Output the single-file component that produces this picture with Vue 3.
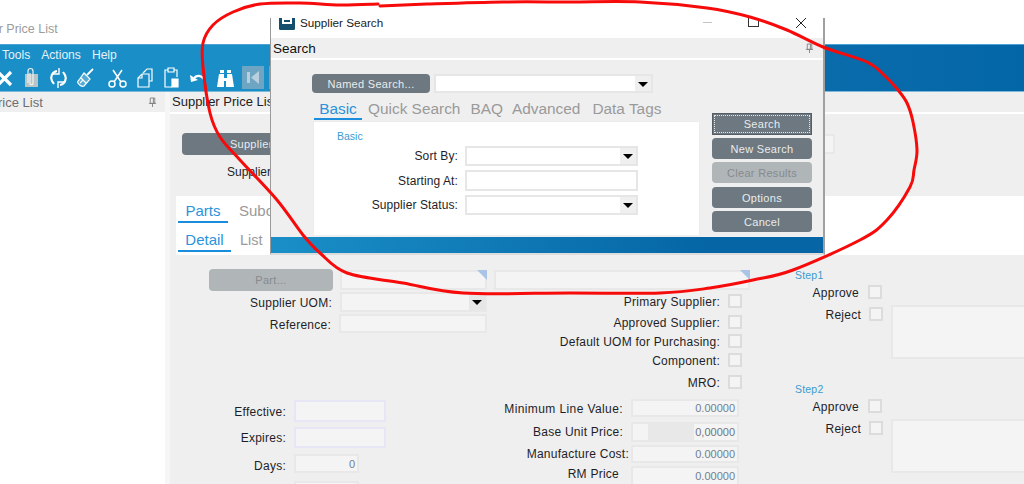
<script setup>
const pts = [[380,6],[430,4],[503,2],[570,2],[640,2],[707,8],[750,17],[787,30],[823,47],[867,62],[885,76],[898,90],[907,103],[913,122],[917,150],[914,170],[910,187],[887,220],[860,240],[793,270],[753,280],[710,288],[660,293],[570,293],[463,293],[403,283],[347,273],[320,253],[303,235],[277,200],[240,160],[220,137],[210,113],[203,67],[203,43],[213,25],[233,12],[260,4],[300,3],[340,5],[378,4]]
function spline(p) {
  let d = `M${p[0][0]} ${p[0][1]}`
  for (let i = 0; i < p.length - 1; i++) {
    const a = p[Math.max(i - 1, 0)], b = p[i], c = p[i + 1], e = p[Math.min(i + 2, p.length - 1)]
    d += `C${b[0] + (c[0] - a[0]) / 6} ${b[1] + (c[1] - a[1]) / 6} ${c[0] - (e[0] - b[0]) / 6} ${c[1] - (e[1] - b[1]) / 6} ${c[0]} ${c[1]}`
  }
  return d
}
const redPath = spline(pts)
const checks = [
  { label: 'Primary Supplier:', cls: 'c1' },
  { label: 'Approved Supplier:', cls: 'c2' },
  { label: 'Default UOM for Purchasing:', cls: 'c3' },
  { label: 'Component:', cls: 'c3' },
  { label: 'MRO:', cls: 'c4' },
]
</script>

<template>
  <div class="app">
    <header class="title">Supplier Price List</header>

    <section class="ribbon">
      <nav class="menu"><span>Tools</span><span>Actions</span><span>Help</span></nav>
      <div class="tools">
        <svg class="ti" viewBox="0 0 27 24"><path d="M7 6L20 19M20 6L7 19" stroke="#fff" stroke-width="3.2" fill="none"/></svg>
        <svg class="ti" viewBox="0 0 27 24"><path d="M7 8h13v13H7z" fill="#b9c4c6"/><path d="M10 17V5a2 2 0 0 1 5 0v13a2 2 0 0 1-3 0V7" fill="none" stroke="#eef2f2" stroke-width="1.2"/></svg>
        <svg class="ti" viewBox="0 0 27 24" fill="none" stroke="#fff" stroke-width="2.2"><path d="M12 5C7 6 5 11 7 15l2 3"/><path d="M15 19c5-1 7-6 5-10l-2-3"/><path d="M14 2v6h-6M13 22v-6h6" stroke-width="1.4"/></svg>
        <svg class="ti" viewBox="0 0 27 24" fill="none" stroke="#fff" stroke-width="1.2"><path d="M15 9L21 3" stroke-width="1.8"/><path d="M12 7l6 6-6 7c-2 1-5-1-6-3-1-1 0-2 1-3z" fill="rgba(255,255,255,.25)"/><path d="M9 12l5 5M8 17l3-3"/></svg>
        <svg class="ti gap" viewBox="0 0 27 24" fill="none" stroke="#fff" stroke-width="1.5"><circle cx="8" cy="18" r="3"/><circle cx="19" cy="18" r="3"/><path d="M10 16L18 4M17 16L9 4"/></svg>
        <svg class="ti" viewBox="0 0 27 24" fill="none" stroke="#fff" stroke-width="1.2"><path d="M12 7l4-4h5v12h-3"/><path d="M11 8h7v13H7V12z"/><path d="M11 8v4H7"/></svg>
        <svg class="ti" viewBox="0 0 27 24" fill="none" stroke="#fff" stroke-width="1.2"><path d="M10 4H7v17h7M16 4h3v7"/><path d="M10 2h6v4h-6z"/><path d="M14 13h6v8h-6z" fill="#fff"/></svg>
        <svg class="ti" viewBox="0 0 27 24" fill="none" stroke="#fff" stroke-width="2.2"><path d="M9 12c3-3 7-3 10 1l1 3"/><path d="M5 9l1 7 7-2z" fill="#fff" stroke="none"/></svg>
        <svg class="ti" viewBox="0 0 27 24" fill="#fff"><path d="M8 4h4v3H8zM15 4h4v3h-4zM7 8h5v4h3V8h5l2 13h-8v-6h-2v6H5z"/></svg>
        <span class="nav"><svg viewBox="0 0 22 23"><path d="M5 6h3v11H5zM17 5v13L9 11.500z" fill="#b8d0de"/></svg></span>
        <span class="nav"></span>
      </div>
    </section>

    <div class="shell">
      <aside class="side">
        <div class="side-head">
          <span class="side-title">Supplier Price List</span>
          <svg class="pin" viewBox="0 0 10 12"><path d="M2.500 1h5v6h-5zM1 7h8M5 7v4M6 1v6" fill="none" stroke="#808080"/></svg>
        </div>
      </aside>
      <div class="split"></div>

      <main class="main">
        <div class="main-head">Supplier Price List</div>
        <div class="main-top">
          <div class="top-row">
            <button class="btn sup">Supplier...</button>
            <div class="fld sup-f"></div>
          </div>
          <div class="sup-l">Supplier Name:</div>
        </div>
        <div class="band">
          <div class="band-row r1">
            <span class="tab on parts">Parts</span><span class="tab sub">Subcontract</span>
          </div>
          <div class="band-row r2">
            <span class="tab on detail">Detail</span><span class="tab list">List</span>
          </div>
        </div>

        <div class="form">
          <div class="col1">
            <div class="line">
              <button class="btn dis part">Part...</button>
              <div class="fld tri f-part"></div>
            </div>
            <div class="line uom">
              <label class="lb w162">Supplier UOM:</label>
              <div class="fld combo f-uom"><i class="arrow alt"></i></div>
            </div>
            <div class="line ref">
              <label class="lb w161">Reference:</label>
              <div class="fld f-ref"></div>
            </div>
            <div class="line eff">
              <label class="lb w116">Effective:</label>
              <div class="fld lav f-eff"></div>
            </div>
            <div class="line exp">
              <label class="lb w116 nudge0">Expires:</label>
              <div class="fld lav f-exp"></div>
            </div>
            <div class="line days">
              <label class="lb w116 nudge2">Days:</label>
              <div class="fld num f-days">0</div>
            </div>
            <div class="line next">
              <label class="lb w116"></label>
              <div class="fld f-days"></div>
            </div>
          </div>

          <div class="col2">
            <div class="fld tri f-desc"></div>
            <div v-for="c in checks" :key="c.label" class="line chk" :class="c.cls">
              <label class="lb w226">{{ c.label }}</label>
              <span class="cb"></span>
            </div>
            <div class="line n1">
              <label class="lb w129 wide">Minimum Line Value:</label>
              <div class="fld num f-n h18">0.00000</div>
            </div>
            <div class="line n2">
              <label class="lb w129 nudge0">Base Unit Price:</label>
              <div class="fld num f-n h20 dark"><i class="shade"></i>0,00000</div>
            </div>
            <div class="line n3">
              <label class="lb w135 nudge0">Manufacture Cost:</label>
              <div class="fld num f-n h18">0.00000</div>
            </div>
            <div class="line n3">
              <label class="lb w125 rm">RM Price</label>
              <div class="fld num f-n h20">0.00000</div>
            </div>
          </div>

          <div class="col3">
            <div class="step">Step1</div>
            <div class="line app-row"><label class="lb w95">Approve</label><span class="cb"></span></div>
            <div class="line rej-row">
              <label class="lb w97 rej">Reject</label><span class="cb rc"></span>
              <div class="fld memo"></div>
            </div>
            <div class="step s2">Step2</div>
            <div class="line app-row"><label class="lb w95">Approve</label><span class="cb"></span></div>
            <div class="line rej-row">
              <label class="lb w97 rej">Reject</label><span class="cb rc"></span>
              <div class="fld memo"></div>
            </div>
          </div>
        </div>
      </main>
    </div>

    <div class="dialog">
      <div class="d-title">
        <svg class="d-icon" viewBox="0 0 16 16"><rect width="16" height="16" rx="1.500" fill="#14506e"/><path d="M3 2h10v9H3z" fill="#fff"/><path d="M5 7h6M3 11h11" stroke="#14506e" stroke-width="2" fill="none"/></svg>
        <span class="d-name">Supplier Search</span>
        <i class="w-min"></i>
        <i class="w-max"></i>
        <svg class="w-x" viewBox="0 0 10 10"><path d="M0 0L10 10M10 0L0 10" stroke="#222" fill="none"/></svg>
      </div>
      <div class="d-head">
        <span>Search</span>
        <svg class="pin" viewBox="0 0 10 12"><path d="M2.500 1h5v6h-5zM1 7h8M5 7v4M6 1v6" fill="none" stroke="#808080"/></svg>
      </div>
      <div class="d-body">
        <div class="d-left">
          <div class="named">
            <button class="btn nbtn">Named Search...</button>
            <div class="fld white combo f-named"><i class="arrow"></i></div>
          </div>
          <div class="d-tabs">
            <span class="dt on">Basic</span><span class="dt t2">Quick Search</span><span class="dt t3">BAQ</span><span class="dt t3b">Advanced</span><span class="dt t4">Data Tags</span>
          </div>
          <div class="panel">
            <div class="grp">Basic</div>
            <div class="pline"><label class="lb w144">Sort By:</label><div class="fld white combo f-s"><i class="arrow"></i></div></div>
            <div class="pline"><label class="lb w144">Starting At:</label><div class="fld white f-s h21"></div></div>
            <div class="pline"><label class="lb w144">Supplier Status:</label><div class="fld white combo f-s"><i class="arrow"></i></div></div>
          </div>
        </div>
        <div class="d-right">
          <button class="btn act focus">Search</button>
          <button class="btn act">New Search</button>
          <button class="btn act dis">Clear Results</button>
          <button class="btn act opt">Options</button>
          <button class="btn act">Cancel</button>
        </div>
      </div>
      <div class="d-foot"></div>
    </div>

    <svg class="ink" viewBox="0 0 1024 484"><path :d="redPath" fill="none" stroke="#f70a0a" stroke-width="3" stroke-linecap="round" stroke-linejoin="round"/></svg>
  </div>
</template>

<style scoped>
.app { position: relative; width: 1024px; height: 484px; overflow: hidden; background: #fff; font-family: "Liberation Sans", Arial, sans-serif; font-size: 12px; color: #1e1e28; }
.title { height: 44px; padding-top: 22px; box-sizing: border-box; margin-left: -43px; color: #9c9c9c; font-size: 12.500px; line-height: 14px; white-space: nowrap; }
.ribbon { height: 48px; box-sizing: border-box; border-top: 1px solid #4aa3d3; border-bottom: 1px solid #7cb8d8; background: linear-gradient(90deg, #1a8fc7 0, #1a8fc7 27%, #0a6cab 80%, #0366a7 100%); }
.menu { display: flex; height: 20px; align-items: center; padding-left: 2px; color: #e6f1f7; gap: 11px; font-size: 12.100px; }
.tools { display: flex; align-items: center; margin-left: -9px; height: 25px; }
.ti { width: 27px; height: 24px; flex: none; }
.ti.gap { margin-left: 5px; }
.nav { display: block; flex: none; width: 22px; height: 23px; margin: 0 2px 0 3px; background: #6ea5c3; }
.nav svg { display: block; width: 22px; height: 23px; }
.shell { display: flex; height: 392px; background: #efefef; }
.side { width: 165px; flex: none; background: #fff; }
.side-head { display: flex; align-items: center; justify-content: space-between; height: 20px; background: #efefef; padding-right: 8px; overflow: hidden; }
.side-title { margin-left: -62px; color: #6e6e6e; font-size: 13px; white-space: nowrap; }
.pin { width: 9px; height: 11px; flex: none; }
.split { width: 5px; flex: none; background: #f6f6f6; }
.main { flex: 1; min-width: 0; }
.main-head { height: 20px; line-height: 20px; padding-left: 2px; font-size: 13px; color: #222; box-sizing: border-box; }
.main-top { height: 84px; box-sizing: border-box; border-top: 2px solid #fff; padding: 19px 0 0 12px; }
.top-row { display: flex; align-items: flex-start; }
.btn { display: block; border: 0; padding: 0; border-radius: 4px; background: #6d7880; color: #e8ecee; font: 11px "Liberation Sans", Arial, sans-serif; letter-spacing: .3px; text-align: center; }
.btn.dis { background: #b0b5b8; color: #858b8f; }
.sup { width: 148px; height: 22px; flex: none; }
.sup-f { width: 498px; height: 20px; margin: 1px 0 0 7px; flex: none; }
.sup-l { margin: 10px 0 0 45px; }
.fld { position: relative; box-sizing: border-box; background: #f4f4f4; border: 2px solid #e8e8e8; flex: none; }
.fld.white { background: #fff; border-color: #e6e6e6; }
.fld.lav { border-color: #e6e6f6; }
.num { display: flex; align-items: center; justify-content: flex-end; padding-right: 2px; color: #6f8190; font-size: 11px; }
.num.dark { color: #6d7680; }
.shade { width: 46px; height: 16px; margin-right: 1px; background: #e8e8e8; }
.combo .arrow { position: absolute; top: 0; right: 0; bottom: 0; width: 16px; background: #efefef; }
.arrow.alt { background: #e6e6e6; }
.arrow::after { content: ""; position: absolute; left: 3px; top: 6px; border: 5px solid transparent; border-top: 5px solid #000; border-bottom: 0; }
.tri::after { content: ""; position: absolute; top: -2px; right: -2px; width: 10px; height: 10px; background: #a9c4e4; clip-path: polygon(0 0, 100% 0, 100% 100%); }
.band { height: 59px; margin-left: 6px; background: #fff; padding-left: 2px; overflow: hidden; }
.band-row { display: flex; }
.r1 { height: 28px; padding-top: 5px; box-sizing: border-box; }
.r2 { height: 29px; padding-top: 6px; box-sizing: border-box; }
.tab { display: block; height: 22px; line-height: 20px; font-size: 15px; color: #9a9a9a; white-space: nowrap; text-align: center; box-sizing: border-box; }
.tab.on { color: #2a93dc; border-bottom: 2px solid #1a8ddc; }
.parts { width: 50px; }
.sub { margin-left: 11px; }
.detail { width: 53px; }
.list { margin-left: 9px; font-size: 14.500px; }
.form { display: flex; padding-top: 14px; height: 229px; box-sizing: border-box; overflow: hidden; }
.col1 { width: 324px; flex: none; }
.col2 { width: 270px; flex: none; }
.col3 { flex: 1; min-width: 0; overflow: hidden; }
.line { display: flex; align-items: center; }
.lb { display: block; flex: none; text-align: right; white-space: nowrap; font-size: 12px; letter-spacing: .25px; line-height: 14px; padding-top: 2px; }
.lb.nudge0 { padding-top: 0; }
.lb.nudge2 { padding-top: 4px; }
.lb.rm { padding: 0 0 4px; }
.lb.wide { letter-spacing: .4px; }
.w162 { width: 162px; margin-right: 8px; }
.w161 { width: 161px; margin-right: 8px; }
.w116 { width: 116px; margin-right: 8px; }
.w226 { width: 226px; margin-right: 8px; }
.w129 { width: 129px; margin-right: 8px; }
.w135 { width: 135px; margin-right: 2px; }
.w125 { width: 125px; margin-right: 12px; }
.w95 { width: 95px; margin-right: 9px; }
.w97 { width: 97px; margin-right: 8px; }
.w144 { width: 144px; margin-right: 7px; padding-top: 0; letter-spacing: .1px; }
.part { width: 124px; height: 22px; margin-left: 39px; flex: none; }
.f-part { width: 147px; height: 20px; margin-left: 7px; }
.uom { margin-top: 1px; }
.f-uom { width: 147px; height: 20px; }
.ref { margin-top: 2px; }
.f-ref { width: 148px; height: 19px; }
.eff { margin-top: 67px; }
.f-eff { width: 92px; height: 22px; }
.exp { margin-top: 5px; }
.f-exp { width: 92px; height: 21px; }
.days { margin-top: 6px; }
.f-days { width: 65px; height: 19px; }
.next { margin-top: 8px; }
.f-desc { width: 256px; height: 20px; margin-top: 1px; }
.chk { height: 14px; }
.c1 { margin-top: 4px; }
.c2 { margin-top: 7px; }
.c3 { margin-top: 5px; }
.c4 { margin-top: 8px; }
.cb { display: block; box-sizing: border-box; width: 14px; height: 14px; background: #f4f4f4; border: 2px solid #dcdcdc; flex: none; }
.f-n { width: 108px; }
.h18 { height: 18px; }
.h20 { height: 20px; }
.n1 { margin-top: 10px; }
.n2 { margin-top: 5px; }
.n3 { margin-top: 3px; }
.step { height: 12px; line-height: 12px; margin-left: 31px; color: #3a9bd0; font-size: 10.500px; letter-spacing: .2px; }
.s2 { margin-top: 24px; }
.app-row { margin-top: 4px; height: 14px; }
.rej-row { margin-top: 6px; align-items: flex-start; }
.rej { margin-top: 3px; padding-top: 0; }
.cb.rc { margin-top: 2px; }
.memo { width: 140px; height: 54px; margin-left: 8px; }

.dialog { position: absolute; left: 270px; top: 18px; width: 555px; height: 237px; box-sizing: border-box; border-left: 1px solid #9a9a9a; border-right: 2px solid #a0a0a0; border-bottom: 2px solid #dcdcdc; background: #fff; overflow: hidden; }
.d-title { position: relative; display: flex; align-items: flex-start; height: 20px; }
.d-icon { width: 16px; height: 16px; margin: -4px 0 0 8px; flex: none; }
.d-name { margin: -2px 0 0 5px; line-height: 14px; font-size: 11.700px; color: #222; }
.w-min { position: absolute; left: 432px; top: 4px; width: 9px; height: 1px; background: #c4c4c4; }
.w-max { position: absolute; left: 477px; top: -3px; width: 9px; height: 10px; border: 1px solid #333; }
.w-x { position: absolute; left: 525px; top: 0; width: 10px; height: 10px; }
.d-head { display: flex; justify-content: space-between; align-items: center; height: 20px; padding: 0 9px 0 2px; background: #efefef; font-size: 13.500px; color: #111; border-bottom: 2px solid #fff; }
.d-body { display: flex; height: 177px; background: #efefef; }
.d-left { width: 387px; margin-left: 42px; padding-top: 14px; flex: none; }
.named { display: flex; margin-left: -1px; }
.nbtn { width: 118px; height: 19px; flex: none; }
.f-named { width: 219px; height: 19px; margin-left: 4px; }
.d-tabs { display: flex; height: 24px; margin: 4px 0 0 1px; }
.dt { display: block; box-sizing: border-box; height: 23px; line-height: 24px; font-size: 15.400px; color: #9a9a9a; white-space: nowrap; }
.dt.on { width: 48px; color: #2a93dc; border-bottom: 2px solid #1a8ddc; text-align: center; }
.t2 { margin-left: 6px; }
.t3 { margin-left: 10px; }
.t3b { margin-left: 9px; }
.t4 { margin-left: 12px; }
.panel { height: 114px; box-sizing: border-box; background: #fff; border: 1px solid #ececec; border-bottom: 0; }
.grp { margin: 8px 0 0 23px; height: 12px; line-height: 12px; font-size: 10.500px; color: #3a9bd0; }
.pline { display: flex; align-items: center; margin-top: 4px; }
.f-s { width: 173px; height: 20px; }
.h21 { height: 21px; }
.d-right { display: flex; flex-direction: column; gap: 3px; width: 100px; margin-left: 12px; padding-top: 53px; flex: none; }
.act { width: 100px; height: 21px; flex: none; }
.opt { margin-top: 1px; }
.focus { position: relative; height: 22px; border-radius: 0; border: 1px solid #555e66; box-sizing: border-box; outline: 1px dotted #e6e6e6; outline-offset: -3px; }
.d-foot { height: 16px; background: linear-gradient(90deg, #1a8fc7 0, #0565a5 80%); }
.ink { position: absolute; left: 0; top: 0; width: 1024px; height: 484px; pointer-events: none; }
</style>
